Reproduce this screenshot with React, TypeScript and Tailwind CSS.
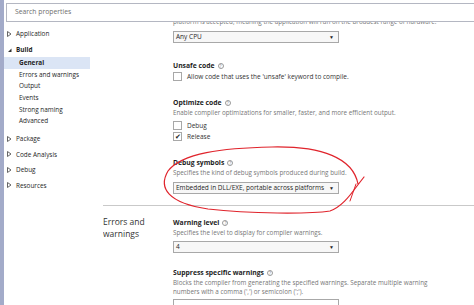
import React from 'react';

const font = { fontFamily: '"Open Sans", "Noto Sans", sans-serif' };

function Help() {
  return (
    <span className="ml-[3px] inline-flex h-[6px] w-[6px] items-center justify-center rounded-full border-[0.5px] border-[#9a9a9a] text-[4.5px] leading-none text-[#8a8a8a] font-normal">
      ?
    </span>
  );
}

function Collapsed() {
  return (
    <svg width="5" height="6" viewBox="0 0 5 6" className="shrink-0">
      <polygon points="0.5,0.5 4,3 0.5,5.5" fill="none" stroke="#555" strokeWidth="0.9" />
    </svg>
  );
}

function Expanded() {
  return (
    <svg width="5" height="6" viewBox="0 0 5 6" className="shrink-0">
      <polygon points="4.5,1.5 4.5,5 1,5" fill="#333" />
    </svg>
  );
}

function Select({ label }: { label: string }) {
  return (
    <div className="flex h-[12px] w-[166px] items-center justify-between border border-[#a8a8a8] bg-[#f7f7f7] pl-[2px] pr-[4px] text-[6.5px] text-[#1e1e1e]">
      <span>{label}</span>
      <span className="text-[5px] leading-none">▼</span>
    </div>
  );
}

function Check({ checked, label }: { checked?: boolean; label: string }) {
  return (
    <div className="flex h-[11px] items-center gap-[5px]">
      <span className="flex h-[9px] w-[9px] items-center justify-center border border-[#a8a8a8] bg-white text-[7px] leading-none text-[#222]">
        {checked ? '✔' : ''}
      </span>
      <span className="text-[6.5px] text-[#333]">{label}</span>
    </div>
  );
}

function Title({ children }: { children: React.ReactNode }) {
  return (
    <div className="flex h-[10px] items-center text-[6.8px] font-bold text-[#1e1e1e]">
      {children}
      <Help />
    </div>
  );
}

function Desc({ children }: { children: React.ReactNode }) {
  return <div className="h-[10px] leading-[10px] whitespace-nowrap text-[6.3px] text-[#777]">{children}</div>;
}

const tops = ['Application'];
const subs = ['General', 'Errors and warnings', 'Output', 'Events', 'Strong naming', 'Advanced'];
const rest = ['Package', 'Code Analysis', 'Debug', 'Resources'];

export default function App() {
  return (
    <div className="relative flex h-[305px] w-[474px] overflow-hidden bg-white" style={font}>
      {/* left frame strip */}
      <div className="w-[4px] shrink-0 bg-[#a3abc9]" />

      <div className="flex min-w-0 flex-1 flex-col">
        {/* search */}
        <div className="ml-[2px] mt-[3px] flex h-[19px] shrink-0 items-center border border-r-0 border-[#b4b7c2] pl-[8px] text-[6.8px] text-[#6e6e6e]">
          Search properties
        </div>

        <div className="flex min-h-0 flex-1">
          {/* nav */}
          <div className="w-[99px] shrink-0 pt-[4px] text-[6.4px] text-[#1e1e1e]">
            {tops.map((t) => (
              <div key={t} className="flex h-[16px] items-center gap-[4px] pl-[3px]">
                <Collapsed />
                {t}
              </div>
            ))}
            <div className="flex h-[15px] items-center gap-[4px] pl-[3px] font-bold">
              <Expanded />
              Build
            </div>
            {subs.map((s, i) => (
              <div
                key={s}
                className={
                  'flex h-[11.7px] w-[86px] items-center pl-[15px] ' +
                  (i === 0 ? 'bg-[#dbe5f5] font-bold' : '')
                }
              >
                {s}
              </div>
            ))}
            <div className="pt-[4px]">
              {rest.map((t) => (
                <div key={t} className="flex h-[15.5px] items-center gap-[4px] pl-[3px]">
                  <Collapsed />
                  {t}
                </div>
              ))}
            </div>
          </div>

          {/* content */}
          <div className="min-w-0 flex-1 overflow-hidden">
            <div className="flex pb-[11px]">
              <div className="w-[70px] shrink-0" />
              <div className="min-w-0 flex-1 -mt-[5px]">
                <Desc>platform is accepted, meaning the application will run on the broadest range of hardware.</Desc>
                <div className="mt-[4px]">
                  <Select label="Any CPU" />
                </div>

                <div className="mt-[18px]">
                  <Title>Unsafe code</Title>
                  <Check label="Allow code that uses the 'unsafe' keyword to compile." />
                </div>

                <div className="mt-[16px]">
                  <Title>Optimize code</Title>
                  <Desc>Enable compiler optimizations for smaller, faster, and more efficient output.</Desc>
                  <div className="mt-[2px]">
                    <Check label="Debug" />
                    <Check checked label="Release" />
                  </div>
                </div>

                <div className="mt-[16px]">
                  <Title>Debug symbols</Title>
                  <Desc>Specifies the kind of debug symbols produced during build.</Desc>
                  <div className="mt-[4px]">
                    <Select label="Embedded in DLL/EXE, portable across platforms" />
                  </div>
                </div>
              </div>
            </div>

            <div className="flex border-t border-[#c9c9c9]">
              <div className="w-[70px] shrink-0 pt-[10px] text-[8.5px] leading-[11.5px] text-[#333]">
                Errors and
                <br />
                warnings
              </div>
              <div className="min-w-0 flex-1 pt-[12px]">
                <Title>Warning level</Title>
                <Desc>Specifies the level to display for compiler warnings.</Desc>
                <div className="mt-[3px]">
                  <Select label="4" />
                </div>

                <div className="mt-[15px]">
                  <Title>Suppress specific warnings</Title>
                  <div className="text-[6.3px] leading-[9px] whitespace-nowrap text-[#777]">
                    Blocks the compiler from generating the specified warnings. Separate multiple warning
                    <br />
                    numbers with a comma (',') or semicolon (';').
                  </div>
                  <div className="mt-[3px] h-[12px] w-[166px] border border-[#a8a8a8] bg-white" />
                </div>
              </div>
            </div>
          </div>
        </div>
      </div>

      {/* hand-drawn annotation */}
      <svg className="pointer-events-none absolute left-0 top-0" width="474" height="305" viewBox="0 0 474 305">
        <path
          d="M 358 184 C 353 158 322 146 272 147 C 222 148 182 153 168 171 C 158 188 168 203 208 209 C 250 214 310 214 330 211 C 341 207 349 197 357 186 L 364 177"
          fill="none"
          stroke="#e0242c"
          strokeWidth="1.2"
          strokeLinecap="round"
        />
        <path d="M 350 201 L 356 184" fill="none" stroke="#e0242c" strokeWidth="1" strokeLinecap="round" />
      </svg>
    </div>
  );
}
